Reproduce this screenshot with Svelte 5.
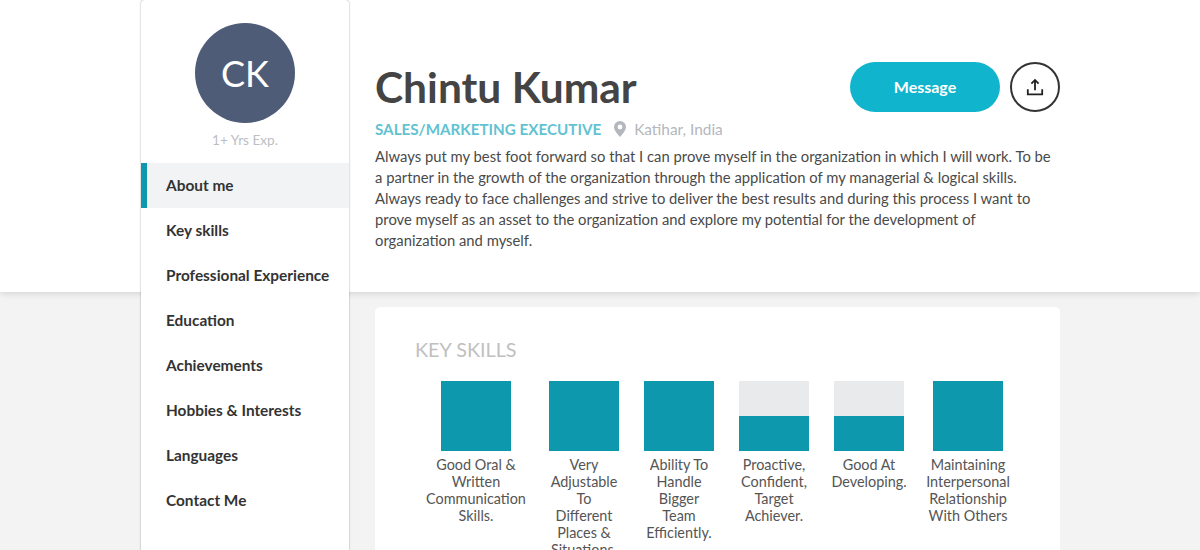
<script>
  const menu = ['About me', 'Key skills', 'Professional Experience', 'Education', 'Achievements', 'Hobbies & Interests', 'Languages', 'Contact Me'];
  const skills = [
    { name: 'Good Oral & Written Communication Skills.', level: 100 },
    { name: 'Very Adjustable To Different Places & Situations.', level: 100 },
    { name: 'Ability To Handle Bigger Team Efficiently.', level: 100 },
    { name: 'Proactive, Confident, Target Achiever.', level: 50 },
    { name: 'Good At Developing.', level: 50 },
    { name: 'Maintaining Interpersonal Relationship With Others', level: 100 }
  ];
</script>

<div class="page">
  <div class="band"></div>
  <div class="wrap">
    <aside class="side">
      <div class="avatar">CK</div>
      <div class="exp">1+ Yrs Exp.</div>
      <ul class="menu">
        {#each menu as item, i}
          <li class:active={i === 0}>{item}</li>
        {/each}
      </ul>
    </aside>

    <main class="main">
      <section class="hero">
        <div class="head">
          <h1>Chintu Kumar</h1>
          <div class="actions">
            <button class="msg">Message</button>
            <button class="share" aria-label="Share">
              <svg width="18" height="18" viewBox="0 0 20 20" fill="none" stroke="#222" stroke-width="2">
                <path d="M10 13.5V2.5M6 6.2l4-4 4 4" />
                <path d="M2 12.5v5.700h16v-5.700" />
              </svg>
            </button>
          </div>
        </div>
        <div class="meta">
          <span class="role">SALES/MARKETING EXECUTIVE</span>
          <svg class="pin" width="12" height="16" viewBox="0 0 12 16">
            <path fill-rule="evenodd" fill="#b4b7bd" d="M6 0a6 6 0 0 1 6 6c0 3.6-4 7.600-6 10C4 13.600 0 9.600 0 6a6 6 0 0 1 6-6zm0 3.600a2.400 2.400 0 1 0 0 4.800 2.400 2.400 0 0 0 0-4.800z" />
          </svg>
          <span class="loc">Katihar, India</span>
        </div>
        <p class="about">Always put my best foot forward so that I can prove myself in the organization in which I will work. To be a partner in the growth of the organization through the application of my managerial &amp; logical skills. Always ready to face challenges and strive to deliver the best results and during this process I want to prove myself as an asset to the organization and explore my potential for the development of organization and myself.</p>
      </section>

      <section class="card">
        <h2>KEY SKILLS</h2>
        <div class="skills">
          {#each skills as skill}
            <div class="skill">
              <div class="box"><div class="fill" style="height: {skill.level}%"></div></div>
              <div class="label">{skill.name}</div>
            </div>
          {/each}
        </div>
      </section>
    </main>
  </div>
</div>

<style>
  :global(body) {
    background: #f3f3f3;
    font-family: Lato, "Liberation Sans", sans-serif;
    color: #444;
  }

  .page {
    position: relative;
    height: 550px;
    overflow: hidden;
  }

  .band {
    position: absolute;
    top: 0;
    left: 0;
    right: 0;
    height: 292px;
    background: #fff;
    box-shadow: 0 2px 6px rgba(0, 0, 0, 0.12);
  }

  .wrap {
    position: relative;
    display: flex;
    width: 919px;
    margin-left: 141px;
  }

  .side {
    box-sizing: border-box;
    width: 208px;
    height: 600px;
    flex: none;
    background: #fff;
    border-radius: 4px;
    box-shadow: 0 0 2px rgba(0, 0, 0, 0.4);
    padding-top: 23px;
  }

  .avatar {
    width: 100px;
    height: 100px;
    margin: 0 auto;
    border-radius: 50%;
    background: #4e5c78;
    color: #fff;
    font-size: 36px;
    line-height: 100px;
    text-align: center;
  }

  .exp {
    margin-top: 9px;
    text-align: center;
    font-size: 13.6px;
    line-height: 17px;
    color: #bcbec3;
  }

  .menu {
    list-style: none;
    margin: 14px 0 0;
    padding: 0;
  }

  .menu li {
    height: 45px;
    line-height: 45px;
    padding-left: 25px;
    font-size: 15.4px;
    font-weight: 700;
    color: #333;
    white-space: nowrap;
  }

  .menu li.active {
    padding-left: 19px;
    border-left: 6px solid #0e98ae;
    background: #f2f3f5;
  }

  .main {
    flex: 1;
    min-width: 0;
    padding-left: 26px;
  }

  .hero {
    height: 292px;
    box-sizing: border-box;
    padding-top: 61px;
  }

  .head {
    display: flex;
    justify-content: space-between;
    height: 52px;
  }

  h1 {
    margin: 0;
    font-size: 42.5px;
    line-height: 51px;
    font-weight: 700;
    color: #444;
  }

  .actions {
    display: flex;
    gap: 10px;
    margin-top: 1px;
  }

  .msg {
    width: 150px;
    height: 50px;
    padding: 0 0 2px;
    border: 0;
    border-radius: 25px;
    background: #10b4cc;
    color: #fff;
    font: 700 16px Lato, sans-serif;
  }

  .share {
    display: flex;
    align-items: center;
    justify-content: center;
    width: 50px;
    height: 50px;
    padding: 0;
    border: 2px solid #333;
    border-radius: 50%;
    background: #fff;
  }

  .meta {
    display: flex;
    align-items: center;
    height: 24px;
    margin-top: 4px;
  }

  .role {
    font-size: 15.2px;
    font-weight: 700;
    color: #62c2d2;
  }

  .pin {
    margin-left: 13px;
    margin-right: 8px;
  }

  .loc {
    font-size: 15.4px;
    color: #b4b7bd;
  }

  .about {
    max-width: 680px;
    margin: 5px 0 0;
    font-size: 14.8px;
    line-height: 21px;
    color: #4a4a4a;
  }

  .card {
    margin-top: 15px;
    height: 400px;
    box-sizing: border-box;
    padding: 29px 40px;
    background: #fff;
    border-radius: 5px;
  }

  h2 {
    margin: 0 0 19px;
    font-size: 19.8px;
    line-height: 26px;
    font-weight: 400;
    color: #c0c0c0;
  }

  .skills {
    display: flex;
    align-items: flex-start;
    gap: 25px;
    margin-left: 13px;
  }

  .skill {
    display: flex;
    flex-direction: column;
    align-items: center;
    width: 70px;
  }

  .skill:first-child {
    width: 96px;
  }

  .skill:last-child {
    width: 78px;
  }

  .box {
    display: flex;
    align-items: flex-end;
    flex: none;
    width: 70px;
    height: 70px;
    margin-bottom: 5px;
    background: #e9eaec;
  }

  .fill {
    width: 100%;
    background: #0e98ae;
  }

  .label {
    flex: none;
    width: min-content;
    font-size: 14.4px;
    line-height: 17px;
    text-align: center;
    color: #555;
  }
</style>
